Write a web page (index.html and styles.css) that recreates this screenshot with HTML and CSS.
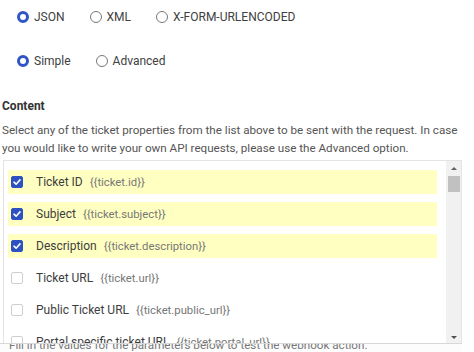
FILE: index.html
```html
<!DOCTYPE html>
<html>
<head>
<meta charset="utf-8">
<link rel="stylesheet" href="styles.css">
</head>
<body>
<div class="page">
  <div class="radio-row formats">
    <label class="opt"><span class="radio on"></span><span>JSON</span></label>
    <label class="opt"><span class="radio"></span><span>XML</span></label>
    <label class="opt"><span class="radio"></span><span>X-FORM-URLENCODED</span></label>
  </div>
  <div class="radio-row modes">
    <label class="opt"><span class="radio on"></span><span>Simple</span></label>
    <label class="opt"><span class="radio"></span><span>Advanced</span></label>
  </div>
  <div class="heading">Content</div>
  <p class="desc">Select any of the ticket properties from the list above to be sent with the request. In case you would like to write your own API requests, please use the Advanced option.</p>
  <div class="listbox">
    <div class="items">
      <div class="item sel"><span class="cb on"><svg viewBox="0 0 12 12" width="12" height="12"><polyline points="3,6.2 5.1,8.2 9,3.9" fill="none" stroke="#fff" stroke-width="1.6" stroke-linecap="round" stroke-linejoin="round"/></svg></span><span class="name">Ticket ID</span><span class="ph">{{ticket.id}}</span></div>
      <div class="item sel"><span class="cb on"><svg viewBox="0 0 12 12" width="12" height="12"><polyline points="3,6.2 5.1,8.2 9,3.9" fill="none" stroke="#fff" stroke-width="1.6" stroke-linecap="round" stroke-linejoin="round"/></svg></span><span class="name">Subject</span><span class="ph">{{ticket.subject}}</span></div>
      <div class="item sel"><span class="cb on"><svg viewBox="0 0 12 12" width="12" height="12"><polyline points="3,6.2 5.1,8.2 9,3.9" fill="none" stroke="#fff" stroke-width="1.6" stroke-linecap="round" stroke-linejoin="round"/></svg></span><span class="name">Description</span><span class="ph">{{ticket.description}}</span></div>
      <div class="item"><span class="cb"></span><span class="name">Ticket URL</span><span class="ph">{{ticket.url}}</span></div>
      <div class="item"><span class="cb"></span><span class="name">Public Ticket URL</span><span class="ph">{{ticket.public_url}}</span></div>
      <div class="item"><span class="cb"></span><span class="name">Portal specific ticket URL</span><span class="ph">{{ticket.portal_url}}</span></div>
    </div>
    <div class="scrollbar">
      <div class="sb-btn"><span class="tri up"></span></div>
      <div class="thumb"></div>
      <div class="sb-space"></div>
      <div class="sb-btn down-btn"><span class="tri down"></span></div>
    </div>
  </div>
  <div class="footer"><span class="footer-text">Fill in the values for the parameters below to test the webhook action.</span></div>
</div>
</body>
</html>
```
FILE: styles.css
```css
html, body {
  margin: 0;
  padding: 0;
  background: #fff;
}
body {
  font-family: Roboto, "Liberation Sans", sans-serif;
  color: #333;
  overflow: hidden;
}
.page {
  width: 460px;
  padding: 5px 0 0 2px;
  display: flex;
  flex-direction: column;
}
.radio-row {
  display: flex;
  align-items: center;
  height: 24px;
  padding-left: 15px;
  font-size: 12px;
  color: #404040;
}
.modes {
  margin-top: 20px;
}
.opt {
  display: flex;
  align-items: center;
  gap: 5px;
  margin-right: 25px;
}
.radio {
  width: 12px;
  height: 12px;
  box-sizing: border-box;
  border: 1px solid #777;
  border-radius: 50%;
  background: #fff;
}
.radio.on {
  border: 3.5px solid #2f55c6;
}
.heading {
  margin-top: 24px;
  font-size: 12px;
  font-weight: 700;
  line-height: 18px;
  color: #333;
}
.desc {
  margin: 6px 0 0;
  font-size: 11.65px;
  line-height: 18px;
  color: #555;
}
.listbox {
  margin-top: 3px;
  margin-left: 1px;
  height: 182px;
  border: 1px solid #e4e4e4;
  border-bottom: none;
  display: flex;
  overflow: hidden;
}
.items {
  flex: 1;
  padding: 9px 9px 0 4px;
  display: flex;
  flex-direction: column;
  gap: 8px;
}
.item {
  height: 24px;
  flex-shrink: 0;
  display: flex;
  align-items: center;
  padding-left: 3px;
  font-size: 12px;
  color: #3d3d3d;
  white-space: nowrap;
}
.item.sel {
  background: #ffffc2;
}
.cb {
  width: 12px;
  height: 12px;
  box-sizing: border-box;
  border: 1px solid #cfcfcf;
  border-radius: 2px;
  background: #fff;
  margin-right: 13px;
  display: flex;
}
.cb.on {
  background: #2e51c2;
  border-color: #2e51c2;
}
.cb svg {
  margin: -1px;
}
.ph {
  margin-left: 7px;
  font-size: 11.3px;
  color: #777;
}
.scrollbar {
  width: 15px;
  background: #f1f1f1;
  display: flex;
  flex-direction: column;
  align-items: center;
}
.sb-btn {
  height: 14px;
  width: 15px;
  display: flex;
  align-items: center;
  justify-content: center;
}
.down-btn {
  height: 12px;
}
.tri {
  width: 0;
  height: 0;
  border-left: 3px solid transparent;
  border-right: 3px solid transparent;
}
.tri.up {
  border-bottom: 3px solid #606060;
}
.tri.down {
  border-top: 3px solid #505050;
}
.thumb {
  margin-top: 1px;
  width: 12px;
  height: 16px;
  background: #c1c1c1;
}
.sb-space {
  flex: 1;
}
.footer {
  margin-left: -2px;
  border-top: 1px solid #d8d8d8;
  height: 9px;
  display: flex;
  align-items: flex-start;
  overflow: hidden;
  padding-left: 9px;
  background: #fcfcfc;
}
.footer-text {
  margin-top: -5px;
  font-size: 11.65px;
  line-height: 13px;
  color: #777;
  white-space: nowrap;
}
```
